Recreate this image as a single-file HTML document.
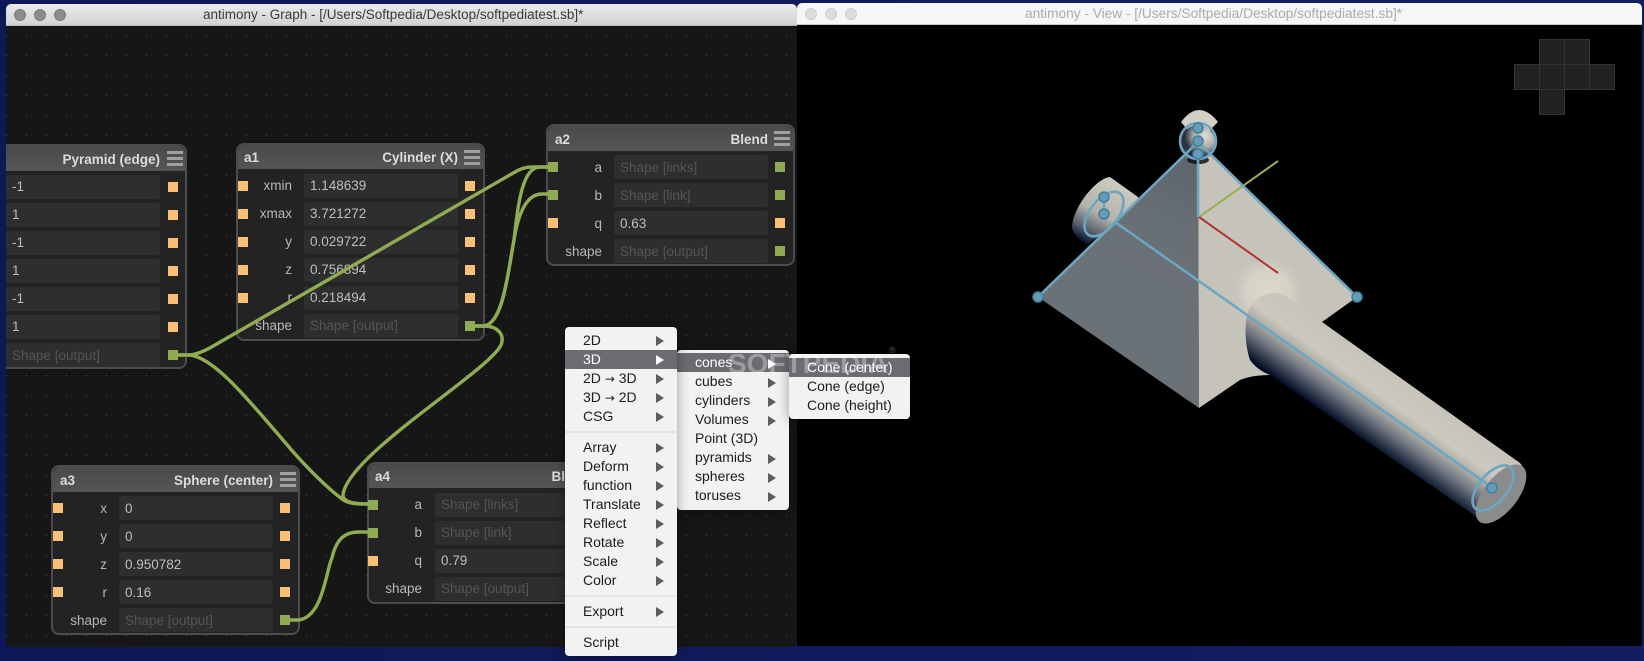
<!DOCTYPE html>
<html>
<head>
<meta charset="utf-8">
<title>antimony</title>
<style>
html,body{margin:0;padding:0;background:#121c5c}
body{width:1644px;height:661px;position:relative;overflow:hidden;font-family:"Liberation Sans",sans-serif;background:linear-gradient(90deg,#0f1856,#131e60)}
div,span{position:absolute;box-sizing:border-box;white-space:nowrap}
#lw{left:0;top:0;width:1644px;height:661px;clip-path:inset(4px 847px 14px 6px round 5px)}
#canvas{left:6px;top:25px;width:791px;height:622px;background-color:#161616;background-image:radial-gradient(circle at .5px .5px,#4d4d4d .6px,transparent .8px);background-size:20px 20px;background-position:0 10px}
#lt{left:6px;top:4px;width:791px;height:22px;background:linear-gradient(#ebebeb,#d2d2d2);border-bottom:1px solid #b5b5b5}
.tl{width:12px;height:12px;border-radius:50%;background:#8d8d8d;border:1px solid #7c7c7c;top:9px}
.tt{top:4px;height:22px;line-height:21px;font-size:13.5px;color:#3a3a3a}
#rw{left:797px;top:3px;width:845px;height:643px;background:#000;border-radius:5px 5px 2px 2px;overflow:hidden}
#rt{left:0;top:0;width:845px;height:22px;background:#f6f6f6;border-bottom:1px solid #c8c8c8}
.tr{width:12px;height:12px;border-radius:50%;background:#dcdcdc;border:1px solid #d0d0d0;top:5px}
.n{background:#232323;border:2px solid #4c4c4c;border-radius:8px}
.h{background:linear-gradient(#4a4a4a,#555);border-radius:7px 7px 0 0}
.f{height:24px;line-height:24px;background:#2e2e2e;border-radius:2px;font-size:13.5px;color:#bebebe;padding-left:6px}
.f.d{color:#555}
.l{width:80px;height:24px;line-height:24px;text-align:right;font-size:13.5px;color:#b8b8b8}
.f.y,.l.y{line-height:26px}
.p{width:10px;height:10px;background:#f8bf75}
.g{width:10px;height:10px;background:#8fa955}
.a{height:20px;line-height:20px;font-size:13.5px;font-weight:bold;color:#dcdcdc}
.b{width:16px;height:15px;background:linear-gradient(#a0a0a0 3px,transparent 3px);background-size:100% 6px}
.m{background:#f2f2f2;border-radius:4px;box-shadow:0 2px 12px rgba(0,0,0,.35)}
.i{left:18px;height:19px;line-height:19px;font-size:14px;color:#1c1c1c}
.i span{position:static;font-family:"DejaVu Sans",sans-serif;font-size:12px}
.hl{left:0;height:19px;background:#6c6b70}
.r{width:0;height:0;border-left:8.5px solid #5c5c5c;border-top:5px solid transparent;border-bottom:5px solid transparent;margin-top:.5px}
.s{left:0;height:2px;background:#e4e4e4}
svg{position:absolute;left:0;top:0}
</style>
</head>
<body>

<div id="lw">
<div id="canvas"></div>

<!-- Pyramid node -->
<div class="n" style="left:-10px;top:144px;width:197px;height:225px"></div>
<div class="h" style="left:-8px;top:146px;width:193px;height:25px"></div>
<div class="a" style="left:40px;width:120px;top:150px;text-align:right">Pyramid (edge)</div>
<div class="b" style="left:167px;top:151px"></div>
<div class="f" style="left:6px;top:175px;width:154px">-1</div><div class="p" style="left:168px;top:182px"></div>
<div class="f" style="left:6px;top:203px;width:154px">1</div><div class="p" style="left:168px;top:210px"></div>
<div class="f" style="left:6px;top:231px;width:154px">-1</div><div class="p" style="left:168px;top:238px"></div>
<div class="f" style="left:6px;top:259px;width:154px">1</div><div class="p" style="left:168px;top:266px"></div>
<div class="f" style="left:6px;top:287px;width:154px">-1</div><div class="p" style="left:168px;top:294px"></div>
<div class="f" style="left:6px;top:315px;width:154px">1</div><div class="p" style="left:168px;top:322px"></div>
<div class="f d y" style="left:6px;top:343px;width:154px">Shape [output]</div><div class="g" style="left:168px;top:350px"></div>

<!-- a1 -->
<div class="n" style="left:236px;top:143px;width:249px;height:198px"></div>
<div class="h" style="left:238px;top:145px;width:245px;height:24px"></div>
<div class="a" style="left:244px;top:148px">a1</div>
<div class="a" style="left:358px;width:100px;top:148px;text-align:right">Cylinder (X)</div>
<div class="b" style="left:464px;top:150px"></div>
<div class="l" style="left:212px;top:174px">xmin</div><div class="f" style="left:304px;top:174px;width:154px">1.148639</div>
<div class="l" style="left:212px;top:202px">xmax</div><div class="f" style="left:304px;top:202px;width:154px">3.721272</div>
<div class="l" style="left:212px;top:230px">y</div><div class="f" style="left:304px;top:230px;width:154px">0.029722</div>
<div class="l" style="left:212px;top:258px">z</div><div class="f" style="left:304px;top:258px;width:154px">0.756894</div>
<div class="l" style="left:212px;top:286px">r</div><div class="f" style="left:304px;top:286px;width:154px">0.218494</div>
<div class="l" style="left:212px;top:314px">shape</div><div class="f d" style="left:304px;top:314px;width:154px">Shape [output]</div>
<div class="p" style="left:238px;top:181px"></div><div class="p" style="left:465px;top:181px"></div>
<div class="p" style="left:238px;top:209px"></div><div class="p" style="left:465px;top:209px"></div>
<div class="p" style="left:238px;top:237px"></div><div class="p" style="left:465px;top:237px"></div>
<div class="p" style="left:238px;top:265px"></div><div class="p" style="left:465px;top:265px"></div>
<div class="p" style="left:238px;top:293px"></div><div class="p" style="left:465px;top:293px"></div>
<div class="g" style="left:465px;top:321px"></div>

<!-- a2 -->
<div class="n" style="left:546px;top:124px;width:249px;height:142px"></div>
<div class="h" style="left:548px;top:126px;width:245px;height:25px"></div>
<div class="a" style="left:555px;top:130px">a2</div>
<div class="a" style="left:668px;width:100px;top:130px;text-align:right">Blend</div>
<div class="b" style="left:774px;top:131px"></div>
<div class="l y" style="left:522px;top:155px">a</div><div class="f d y" style="left:614px;top:155px;width:154px">Shape [links]</div>
<div class="l y" style="left:522px;top:183px">b</div><div class="f d y" style="left:614px;top:183px;width:154px">Shape [link]</div>
<div class="l y" style="left:522px;top:211px">q</div><div class="f y" style="left:614px;top:211px;width:154px">0.63</div>
<div class="l y" style="left:522px;top:239px">shape</div><div class="f d y" style="left:614px;top:239px;width:154px">Shape [output]</div>
<div class="g" style="left:548px;top:162px"></div><div class="g" style="left:775px;top:162px"></div>
<div class="g" style="left:548px;top:190px"></div><div class="g" style="left:775px;top:190px"></div>
<div class="p" style="left:548px;top:218px"></div><div class="p" style="left:775px;top:218px"></div>
<div class="g" style="left:775px;top:246px"></div>

<!-- a3 -->
<div class="n" style="left:51px;top:465px;width:249px;height:170px"></div>
<div class="h" style="left:53px;top:467px;width:245px;height:25px"></div>
<div class="a" style="left:60px;top:471px">a3</div>
<div class="a" style="left:143px;width:130px;top:471px;text-align:right">Sphere (center)</div>
<div class="b" style="left:280px;top:472px"></div>
<div class="l y" style="left:27px;top:496px">x</div><div class="f y" style="left:119px;top:496px;width:154px">0</div>
<div class="l y" style="left:27px;top:524px">y</div><div class="f y" style="left:119px;top:524px;width:154px">0</div>
<div class="l y" style="left:27px;top:552px">z</div><div class="f y" style="left:119px;top:552px;width:154px">0.950782</div>
<div class="l y" style="left:27px;top:580px">r</div><div class="f y" style="left:119px;top:580px;width:154px">0.16</div>
<div class="l y" style="left:27px;top:608px">shape</div><div class="f d y" style="left:119px;top:608px;width:154px">Shape [output]</div>
<div class="p" style="left:53px;top:503px"></div><div class="p" style="left:280px;top:503px"></div>
<div class="p" style="left:53px;top:531px"></div><div class="p" style="left:280px;top:531px"></div>
<div class="p" style="left:53px;top:559px"></div><div class="p" style="left:280px;top:559px"></div>
<div class="p" style="left:53px;top:587px"></div><div class="p" style="left:280px;top:587px"></div>
<div class="g" style="left:280px;top:615px"></div>

<!-- a4 -->
<div class="n" style="left:367px;top:462px;width:249px;height:142px"></div>
<div class="h" style="left:369px;top:464px;width:245px;height:24px"></div>
<div class="a" style="left:375px;top:467px">a4</div>
<div class="a" style="left:489px;width:100px;top:467px;text-align:right">Blend</div>
<div class="l" style="left:342px;top:493px">a</div><div class="f d" style="left:435px;top:493px;width:154px">Shape [links]</div>
<div class="l" style="left:342px;top:521px">b</div><div class="f d" style="left:435px;top:521px;width:154px">Shape [link]</div>
<div class="l" style="left:342px;top:549px">q</div><div class="f" style="left:435px;top:549px;width:154px">0.79</div>
<div class="l" style="left:342px;top:577px">shape</div><div class="f d" style="left:435px;top:577px;width:154px">Shape [output]</div>
<div class="g" style="left:368px;top:500px"></div>
<div class="g" style="left:368px;top:528px"></div>
<div class="p" style="left:368px;top:556px"></div>

<!-- wires -->
<svg width="1644" height="661" viewBox="0 0 1644 661" fill="none" stroke="#8fac52" stroke-width="3.4" stroke-linecap="round">
<path d="M173 355L190 355Q200 354 215 345L515 172Q523 167 532 167L553 167"/>
<path d="M173 355L190 355C215 358 250 402 283 440C308 470 330 490 342 499Q348 504 361 504L373 504"/>
<path d="M471 326L484 326C502 323 507 280 514 240C518 205 522 167 540 167L553 167"/>
<path d="M471 326L484 326C504 323 508 270 514 240C518 215 526 194 542 194L553 194"/>
<path d="M471 326L484 326C498 326 505 335 501 345C488 372 347 455 343 495C343 503 356 504 373 504"/>
<path d="M285 620L298 620C323 618 326 570 332 558C336 540 344 532 359 532L373 532"/>
</svg>

<div id="lt"></div>
<div class="tl" style="left:14px"></div>
<div class="tl" style="left:34px"></div>
<div class="tl" style="left:54px"></div>
<div class="tt" style="left:203px">antimony - Graph - [/Users/Softpedia/Desktop/softpediatest.sb]*</div>
</div>

<!-- right window -->
<div id="rw">
<div id="rt"></div>
<div class="tr" style="left:8px"></div>
<div class="tr" style="left:28px"></div>
<div class="tr" style="left:48px"></div>
<div class="tt" style="left:228px;top:0;color:#ababab;font-size:13.7px">antimony - View - [/Users/Softpedia/Desktop/softpediatest.sb]*</div>
</div>

<svg width="1644" height="661" viewBox="0 0 1644 661">
<defs>
<linearGradient id="cy" gradientUnits="userSpaceOnUse" x1="1400" y1="377" x2="1357" y2="437">
<stop offset="0" stop-color="#c6c4b9"/><stop offset=".35" stop-color="#cccabe"/><stop offset=".5" stop-color="#b0afa8"/><stop offset=".7" stop-color="#6f7580"/><stop offset=".88" stop-color="#2a3548"/><stop offset="1" stop-color="#010b26"/>
</linearGradient>
<linearGradient id="cs" gradientUnits="userSpaceOnUse" x1="1112" y1="184" x2="1082" y2="240">
<stop offset="0" stop-color="#cbc9bd"/><stop offset=".5" stop-color="#b4b3ab"/><stop offset=".8" stop-color="#5a6270"/><stop offset="1" stop-color="#0c1830"/>
</linearGradient>
<linearGradient id="lf" gradientUnits="userSpaceOnUse" x1="1190" y1="150" x2="1120" y2="300">
<stop offset="0" stop-color="#5d636a"/><stop offset=".5" stop-color="#686f75"/><stop offset="1" stop-color="#6b7277"/>
</linearGradient>
<radialGradient id="hi" gradientUnits="userSpaceOnUse" cx="1268" cy="292" r="38">
<stop offset="0" stop-color="#dcd9cc"/><stop offset=".6" stop-color="#d4d1c5"/><stop offset="1" stop-color="#c6c4ba" stop-opacity="0"/>
</radialGradient>
<radialGradient id="sp" gradientUnits="userSpaceOnUse" cx="1205" cy="136" r="20">
<stop offset="0" stop-color="#e0ded4"/><stop offset=".6" stop-color="#a9a9a5"/><stop offset="1" stop-color="#2a3140"/>
</radialGradient>
</defs>
<path d="M1138 197L1110 177C1097 178 1074 205 1072 226C1072 235 1080 240 1087 244L1140 210Z" fill="url(#cs)"/>
<path d="M1198 142L1038 297L1199 408Z" fill="url(#lf)"/>
<path d="M1198 142L1357 297L1322 322L1290 345L1270 375Q1252 375 1240 380L1199 408Z" fill="#c6c4ba"/>
<ellipse cx="1268" cy="296" rx="38" ry="38" fill="url(#hi)"/>
<path d="M1287 297C1282 294 1278 293 1273 293C1262 293 1252 302 1248 312C1244 325 1245 345 1250 360C1255 367 1262 372 1270 375L1477 517L1525 470L1520 463Z" fill="url(#cy)"/>
<g transform="rotate(-52 1501 494)"><ellipse cx="1501" cy="494" rx="35" ry="17" fill="#8a8c8c"/></g>
<path d="M1181 122Q1199 98 1218 122L1198 142Z" fill="#d2d0c6"/>
<ellipse cx="1198" cy="160" rx="11" ry="4" fill="#0a0a0a" opacity=".8"/>
<circle cx="1198" cy="142" r="17" fill="url(#sp)"/>
<path d="M1199 217L1278 161" stroke="#97b04f" stroke-width="2" fill="none"/>
<path d="M1199 217L1278 273" stroke="#b03434" stroke-width="2" fill="none"/>
<g fill="none" stroke="#6ca6c2" stroke-width="2.6">
<path d="M1198 142L1038 297"/>
<path d="M1198 142L1357 297"/>
<path d="M1198 154L1198 217"/>
<path d="M1115 222L1490 486"/>
<path d="M1104 197L1104 214"/>
<circle cx="1198" cy="141" r="18"/>
<g transform="rotate(-52 1104 214)"><ellipse cx="1104" cy="214" rx="26" ry="14"/></g>
<g transform="rotate(-50 1493 488)"><ellipse cx="1493" cy="488" rx="27" ry="14"/></g>
</g>
<g fill="#649db9" stroke="#437d9b" stroke-width="1.5">
<circle cx="1038" cy="297" r="5"/><circle cx="1357" cy="297" r="5"/>
<circle cx="1198" cy="128" r="5"/><circle cx="1198" cy="141" r="5"/><circle cx="1198" cy="154" r="5"/>
<circle cx="1104" cy="197" r="5"/><circle cx="1104" cy="214" r="5"/><circle cx="1492" cy="488" r="5"/>
</g>
<g fill="#222" stroke="#333" stroke-width="1">
<rect x="1539.5" y="39.5" width="25" height="25"/><rect x="1564.5" y="39.5" width="25" height="25"/>
<rect x="1514.5" y="64.5" width="25" height="25"/><rect x="1539.5" y="64.5" width="25" height="25"/><rect x="1564.5" y="64.5" width="25" height="25"/><rect x="1589.5" y="64.5" width="25" height="25"/>
<rect x="1539.5" y="89.5" width="25" height="25"/>
</g>
</svg>

<!-- menus -->
<div class="m" style="left:677px;top:350px;width:112px;height:160px">
<div class="hl" style="top:3px;width:112px"></div>
<div class="i" style="top:3px;color:#fff">cones</div><div class="r" style="left:91px;top:8px;border-left-color:#fff"></div>
<div class="i" style="top:22px">cubes</div><div class="r" style="left:91px;top:27px"></div>
<div class="i" style="top:41px">cylinders</div><div class="r" style="left:91px;top:46px"></div>
<div class="i" style="top:60px">Volumes</div><div class="r" style="left:91px;top:65px"></div>
<div class="i" style="top:79px">Point (3D)</div>
<div class="i" style="top:98px">pyramids</div><div class="r" style="left:91px;top:103px"></div>
<div class="i" style="top:117px">spheres</div><div class="r" style="left:91px;top:122px"></div>
<div class="i" style="top:136px">toruses</div><div class="r" style="left:91px;top:141px"></div>
</div>
<div class="m" style="left:789px;top:354px;width:121px;height:65px">
<div class="hl" style="top:4px;width:121px"></div>
<div class="i" style="top:3.5px;color:#fff">Cone (center)</div>
<div class="i" style="top:22.5px">Cone (edge)</div>
<div class="i" style="top:41.5px">Cone (height)</div>
</div>
<div class="m" style="left:565px;top:327px;width:112px;height:329px">
<div class="hl" style="top:23px;width:112px"></div>
<div class="i" style="top:3.5px">2D</div><div class="r" style="left:91px;top:8px"></div>
<div class="i" style="top:22.5px;color:#fff">3D</div><div class="r" style="left:91px;top:27px;border-left-color:#fff"></div>
<div class="i" style="top:41.5px">2D <span>→</span> 3D</div><div class="r" style="left:91px;top:46px"></div>
<div class="i" style="top:60.5px">3D <span>→</span> 2D</div><div class="r" style="left:91px;top:65px"></div>
<div class="i" style="top:79.5px">CSG</div><div class="r" style="left:91px;top:84px"></div>
<div class="s" style="top:104px;width:112px"></div>
<div class="i" style="top:110.5px">Array</div><div class="r" style="left:91px;top:115px"></div>
<div class="i" style="top:129.5px">Deform</div><div class="r" style="left:91px;top:134px"></div>
<div class="i" style="top:148.5px">function</div><div class="r" style="left:91px;top:153px"></div>
<div class="i" style="top:167.5px">Translate</div><div class="r" style="left:91px;top:172px"></div>
<div class="i" style="top:186.5px">Reflect</div><div class="r" style="left:91px;top:191px"></div>
<div class="i" style="top:205.5px">Rotate</div><div class="r" style="left:91px;top:210px"></div>
<div class="i" style="top:224.5px">Scale</div><div class="r" style="left:91px;top:229px"></div>
<div class="i" style="top:243.5px">Color</div><div class="r" style="left:91px;top:248px"></div>
<div class="s" style="top:268px;width:112px"></div>
<div class="i" style="top:274.5px">Export</div><div class="r" style="left:91px;top:279px"></div>
<div class="s" style="top:299px;width:112px"></div>
<div class="i" style="top:305.5px">Script</div>
</div>

<div style="left:728px;top:347px;font-size:28px;line-height:34px;font-weight:bold;color:rgba(255,255,255,.32)">SOFTPEDIA</div>
<div style="left:889px;top:345px;font-size:9px;line-height:10px;color:rgba(255,255,255,.3)">®</div>
</body>
</html>
